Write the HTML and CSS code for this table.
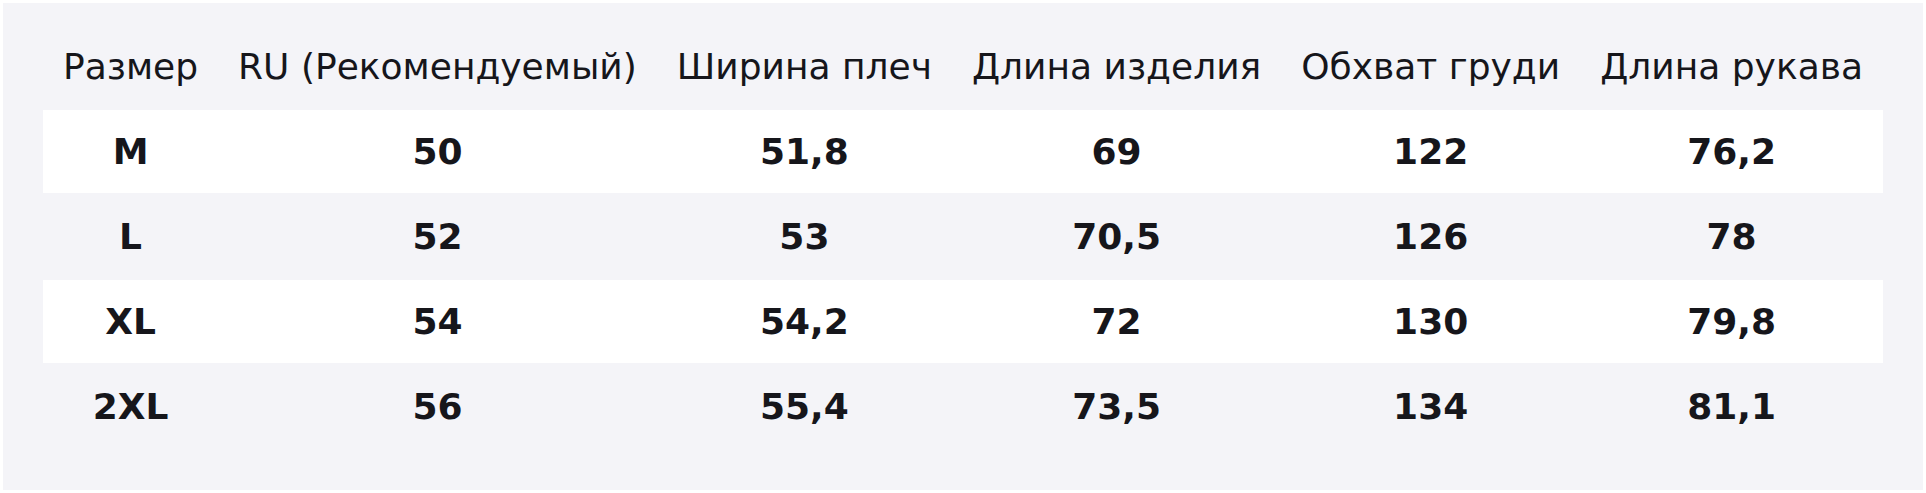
FILE: index.html
```html
<!DOCTYPE html>
<html lang="ru">
<head>
<meta charset="utf-8">
<link rel="stylesheet" href="styles.css">
</head>
<body>
<div class="panel">
  <table class="sizes">
    <thead>
      <tr>
        <th>Размер</th>
        <th>RU (Рекомендуемый)</th>
        <th>Ширина плеч</th>
        <th>Длина изделия</th>
        <th>Обхват груди</th>
        <th>Длина рукава</th>
      </tr>
    </thead>
    <tbody>
      <tr class="odd"><td>M</td><td>50</td><td>51,8</td><td>69</td><td>122</td><td>76,2</td></tr>
      <tr><td>L</td><td>52</td><td>53</td><td>70,5</td><td>126</td><td>78</td></tr>
      <tr class="odd"><td>XL</td><td>54</td><td>54,2</td><td>72</td><td>130</td><td>79,8</td></tr>
      <tr><td>2XL</td><td>56</td><td>55,4</td><td>73,5</td><td>134</td><td>81,1</td></tr>
    </tbody>
  </table>
</div>
</body>
</html>
```
FILE: styles.css
```css
html, body {
  margin: 0;
  background: #ffffff;
}
body {
  padding: 3px;
  font-family: "DejaVu Sans", "Liberation Sans", sans-serif;
  color: #16161b;
}
.panel {
  background: #f4f4f8;
  height: 487px;
  box-sizing: border-box;
  padding: 20px 40px 0 40px;
}
.sizes {
  width: 100%;
  border-collapse: separate;
  border-spacing: 0 2px;
}
.sizes th,
.sizes td {
  height: 83px;
  padding: 0 20px;
  text-align: center;
  vertical-align: middle;
  white-space: nowrap;
  font-size: 36px;
  line-height: 1;
}
.sizes th {
  font-weight: normal;
}
.sizes td {
  font-weight: bold;
}
.sizes tr.odd td {
  background: #ffffff;
}
```
